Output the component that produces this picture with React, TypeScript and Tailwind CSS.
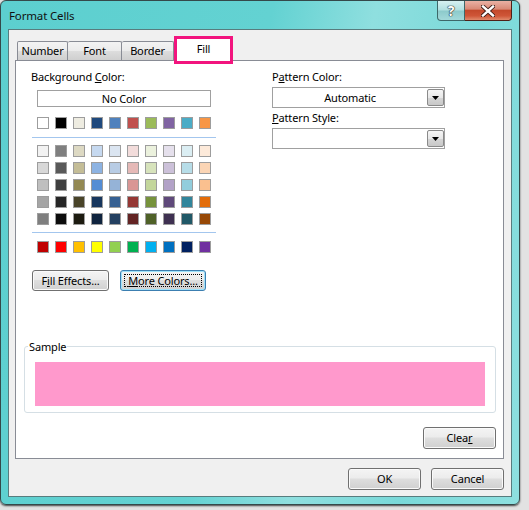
import React from "react";

const themeRow = ["#ffffff", "#000000", "#eeece1", "#1f497d", "#4f81bd", "#c0504d", "#9bbb59", "#8064a2", "#4bacc6", "#f79646"];

const tintRows = [
  ["#f2f2f2", "#7f7f7f", "#ddd9c3", "#c6d9f0", "#dbe5f1", "#f2dcdb", "#ebf1dd", "#e5e0ec", "#dbeef3", "#fdeada"],
  ["#d8d8d8", "#595959", "#c4bd97", "#8db3e2", "#b8cce4", "#e5b9b7", "#d7e3bc", "#ccc1d9", "#b7dde8", "#fbd5b5"],
  ["#bfbfbf", "#3f3f3f", "#938953", "#548dd4", "#95b3d7", "#d99694", "#c3d69b", "#b2a2c7", "#92cddc", "#fac08f"],
  ["#a5a5a5", "#262626", "#494429", "#17365d", "#366092", "#953734", "#76923c", "#5f497a", "#31859b", "#e36c09"],
  ["#7f7f7f", "#0c0c0c", "#1d1b10", "#0f243e", "#244061", "#632423", "#4f6128", "#3f3151", "#205867", "#974806"],
];

const standardRow = ["#c00000", "#ff0000", "#ffc000", "#ffff00", "#92d050", "#00b050", "#00b0f0", "#0070c0", "#002060", "#7030a0"];

function SwatchRow({ colors }: { colors: string[] }) {
  return (
    <div className="ml-[5px] flex gap-[6px]">
      {colors.map((c, i) => (
        <div key={i} className="h-[12px] w-[12px] border border-[#9d9d9d]" style={{ backgroundColor: c }} />
      ))}
    </div>
  );
}

function WinButton({ className = "", focused = false, children }: { className?: string; focused?: boolean; children: React.ReactNode }) {
  return (
    <div
      className={`relative flex items-center justify-center rounded-[3px] border bg-[linear-gradient(to_bottom,#f4f4f4_0%,#ececec_45%,#dedede_50%,#d0d0d0_100%)] text-black ${
        focused ? "border-[#3c7fb1] shadow-[inset_0_0_0_1px_#9fe2fa]" : "border-[#707070] shadow-[inset_0_0_0_1px_#fafafa]"
      } ${className}`}
    >
      {focused && <span className="absolute inset-[3px] border border-dotted border-black" />}
      <span className="relative">{children}</span>
    </div>
  );
}

function Combo({ value }: { value?: string }) {
  return (
    <div className="flex h-[21px] w-[173px] border border-[#a0a0a0] bg-white">
      <div className="flex flex-1 items-center justify-center">{value}</div>
      <div className="my-px flex w-[17px] items-center justify-center rounded-[2px] border border-[#8a8a8a] bg-[linear-gradient(to_bottom,#f6f6f6_0%,#e8e8e8_50%,#d6d6d6_51%,#c8c8c8_100%)]">
        <svg width="7" height="4" viewBox="0 0 7 4">
          <path d="M0 0h7L3.5 4z" fill="#000" />
        </svg>
      </div>
    </div>
  );
}

export default function App() {
  return (
    <div className="h-[510px] w-[529px] overflow-hidden bg-[#e2e2e2] font-['Noto_Sans',sans-serif] text-[11px] leading-[14px] tracking-[-0.15px] text-black">
      {/* window frame */}
      <div className="flex h-[505px] w-[520px] flex-col rounded-[6px] border border-[#34494a] bg-[linear-gradient(100deg,#5ccfcf_0%,#63d2d2_45%,#8fdfdf_62%,#7ad9d9_80%,#8ee0e0_100%)] px-[7px] pb-[7px] shadow-[0_1px_2px_rgba(0,0,0,0.7)]">
        {/* title bar */}
        <div className="flex h-[28px] items-start justify-between">
          <span className="ml-[1px] mt-[8px] text-[11.5px] text-[#111]">Format Cells</span>
          <div className="flex">
            <div className="flex h-[20px] w-[28px] items-center justify-center rounded-bl-[4px] border border-t-0 border-[#3d6869] bg-[linear-gradient(to_bottom,#d6f1f1_0%,#b1e0e0_48%,#8ccacb_52%,#a3d9da_100%)]">
              <span className="text-[14px] font-bold leading-[14px] text-white [text-shadow:0_0_1px_#222,0_0_1px_#222,0_0_1px_#222]">?</span>
            </div>
            <div className="flex h-[20px] w-[47px] items-center justify-center rounded-br-[4px] border border-l-0 border-t-0 border-[#4f2017] bg-[linear-gradient(to_bottom,#eab1a4_0%,#d98a77_42%,#c4492c_50%,#cf5638_78%,#e08a6c_100%)]">
              <svg width="14" height="12" viewBox="0 0 14 12">
                <path d="M2 1.5L12 10.5M12 1.5L2 10.5" stroke="#3b1a14" strokeWidth="4.2" strokeLinecap="square" />
                <path d="M2 1.5L12 10.5M12 1.5L2 10.5" stroke="#ffffff" strokeWidth="2.4" strokeLinecap="square" />
              </svg>
            </div>
          </div>
        </div>

        {/* client area */}
        <div className="flex flex-1 flex-col border border-[#587c7e] bg-[#f0f0f0]">
          <div className="ml-[6px] mt-[8px] w-[489px]">
            {/* tabs */}
            <div className="flex h-[22px] items-end pl-[2px]">
              <div className="flex h-[19px] w-[51px] items-center justify-center rounded-t-[2px] border border-b-0 border-[#898c95] bg-[linear-gradient(to_bottom,#f3f3f3_0%,#ebebeb_50%,#dddddd_51%,#cfcfcf_100%)]">
                Number
              </div>
              <div className="flex h-[19px] w-[54px] items-center justify-center rounded-t-[2px] border border-b-0 border-l-0 border-[#898c95] bg-[linear-gradient(to_bottom,#f3f3f3_0%,#ebebeb_50%,#dddddd_51%,#cfcfcf_100%)]">
                Font
              </div>
              <div className="flex h-[19px] w-[52px] items-center justify-center rounded-t-[2px] border border-b-0 border-l-0 border-[#898c95] bg-[linear-gradient(to_bottom,#f3f3f3_0%,#ebebeb_50%,#dddddd_51%,#cfcfcf_100%)]">
                Border
              </div>
              <div className="relative z-10 -mb-px flex h-[23px] w-[59px] items-center justify-center bg-white pb-[2px]">
                Fill
                <span className="absolute -bottom-[3px] -top-[2px] left-0 right-0 border-[3px] border-[#f2147e]" />
              </div>
            </div>

            {/* tab panel */}
            <div className="h-[399px] border border-[#898c95] bg-white pt-[9px]">
              <div className="ml-[16px] flex">
                {/* background colour column */}
                <div className="flex w-[185px] flex-col">
                  <span className="-ml-px">
                    Background <u>C</u>olor:
                  </span>
                  <div className="ml-[5px] mt-[6px] flex h-[17px] w-[174px] items-center justify-center border border-[#a0a0a0]">No Color</div>
                  <div className="mt-[10px]">
                    <SwatchRow colors={themeRow} />
                  </div>
                  <div className="mt-[8px] h-px w-[184px] bg-[#a3c6ee]" />
                  <div className="mt-[7px] flex flex-col gap-[5px]">
                    {tintRows.map((row, i) => (
                      <SwatchRow key={i} colors={row} />
                    ))}
                  </div>
                  <div className="mt-[7px] h-px w-[184px] bg-[#a3c6ee]" />
                  <div className="mt-[8px]">
                    <SwatchRow colors={standardRow} />
                  </div>
                  <div className="mt-[17px] flex gap-[11px]">
                    <WinButton className="h-[21px] w-[77px]">
                      F<u>i</u>ll Effects...
                    </WinButton>
                    <WinButton className="h-[21px] w-[86px]" focused>
                      <u>M</u>ore Colors...
                    </WinButton>
                  </div>
                </div>

                {/* pattern column */}
                <div className="ml-[55px] flex flex-col">
                  <span>
                    P<u>a</u>ttern Color:
                  </span>
                  <div className="mt-[3px]">
                    <Combo value="Automatic" />
                  </div>
                  <span className="mt-[3px]">
                    <u>P</u>attern Style:
                  </span>
                  <div className="mt-[3px]">
                    <Combo />
                  </div>
                </div>
              </div>

              {/* sample */}
              <div className="relative ml-[8px] mt-[55px] h-[67px] w-[472px] rounded-[3px] border border-[#d5dfe5] px-[10px] pt-[15px]">
                <span className="absolute -top-[7px] left-[3px] bg-white px-px">Sample</span>
                <div className="h-[44px] w-full bg-[#ff99cc]" />
              </div>

              <div className="ml-[8px] mt-[14px] flex w-[472px] justify-end">
                <WinButton className="h-[22px] w-[73px]">
                  Clea<u>r</u>
                </WinButton>
              </div>
            </div>
          </div>

          {/* footer */}
          <div className="mr-[7px] mt-[9px] flex justify-end gap-[10px]">
            <WinButton className="h-[22px] w-[73px]">OK</WinButton>
            <WinButton className="h-[22px] w-[73px]">Cancel</WinButton>
          </div>
        </div>
      </div>
    </div>
  );
}
